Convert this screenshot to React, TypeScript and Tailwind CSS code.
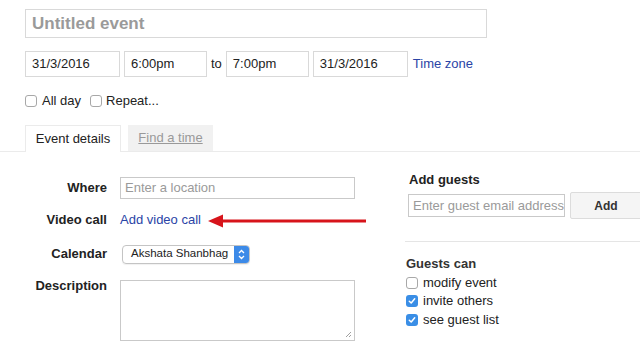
import React from 'react';

function Box({ className = '', children }: { className?: string; children?: React.ReactNode }) {
  return (
    <div className={`h-[26px] border border-[#d9d9d9] flex items-center pl-[6px] text-[13px] text-[#222] ${className}`}>
      {children}
    </div>
  );
}

function Check({ checked = false }: { checked?: boolean }) {
  if (checked) {
    return (
      <span className="w-[12px] h-[12px] rounded-[3px] bg-[#3a8ee6] flex items-center justify-center shrink-0">
        <svg width="8" height="8" viewBox="0 0 8 8">
          <path d="M1.3 4.2 L3.2 6 L6.7 1.8" stroke="white" strokeWidth="1.5" fill="none" strokeLinecap="round" strokeLinejoin="round" />
        </svg>
      </span>
    );
  }
  return <span className="w-[12px] h-[12px] rounded-[3px] border border-[#a8a8a8] bg-white shrink-0" />;
}

export default function App() {
  return (
    <div
      className="relative w-[640px] h-[350px] overflow-hidden bg-white text-[13px] text-[#222]"
      style={{ fontFamily: '"Liberation Sans", Arial, sans-serif' }}
    >
      {/* Title + dates */}
      <div className="pl-[25px] pt-[9px]">
        <div className="w-[462px] h-[29px] border border-[#d9d9d9] flex items-center pl-[6px] text-[17px] font-bold text-[#9a9a9a]">
          Untitled event
        </div>

        <div className="mt-[13px] flex items-center">
          <Box className="w-[95px]">31/3/2016</Box>
          <Box className="w-[83px] ml-[4px]">6:00pm</Box>
          <span className="ml-[4px] mr-[4px] text-[13px]">to</span>
          <Box className="w-[83px]">7:00pm</Box>
          <Box className="w-[95px] ml-[4px]">31/3/2016</Box>
          <span className="ml-[5px] text-[13px] text-[#2a44a6]">Time zone</span>
        </div>

        <div className="mt-[17px] flex items-center h-[14px]">
          <Check />
          <span className="ml-[5px]">All day</span>
          <span className="ml-[9px] flex items-center">
            <Check />
          </span>
          <span className="ml-[4px]">Repeat...</span>
        </div>
      </div>

      {/* Tabs */}
      <div className="mt-[17px] flex items-end border-b border-[#ebebeb] pl-[25px] h-[27px]">
        <div className="h-[27px] w-[96px] border border-b-0 border-[#ebebeb] bg-white flex items-center justify-center -mb-px">
          Event details
        </div>
        <div className="ml-[7px] h-[26px] w-[85px] bg-[#f1f1f1] flex items-center justify-center text-[#999] underline">
          Find a time
        </div>
      </div>

      {/* Body */}
      <div className="flex">
        {/* Left form */}
        <div className="w-[405px] shrink-0 pt-[25px]">
          <div className="flex items-center h-[22px]">
            <span className="w-[107px] text-right font-bold">Where</span>
            <div className="ml-[13px] w-[235px] h-[22px] border border-[#c9c9c9] flex items-center pl-[4px] text-[#9a9a9a]">
              Enter a location
            </div>
          </div>

          <div className="mt-[10px] flex items-center h-[22px]">
            <span className="w-[107px] text-right font-bold">Video call</span>
            <span className="ml-[13px] text-[#2a44a6]">Add video call</span>
          </div>

          <div className="mt-[12px] flex items-center h-[22px]">
            <span className="w-[107px] text-right font-bold">Calendar</span>
            <div className="ml-[15px] w-[128px] h-[19px] rounded-[4px] border border-[#c4c4c4] flex items-center overflow-hidden shadow-[0_1px_1px_rgba(0,0,0,0.06)]">
              <span className="flex-1 pl-[8px] text-[11.5px] leading-none whitespace-nowrap">Akshata Shanbhag</span>
              <span className="w-[15px] h-full bg-[#3c8ae8] flex items-center justify-center shrink-0">
                <svg width="7" height="11" viewBox="0 0 7 11">
                  <path d="M1 4 L3.5 1.5 L6 4 M1 7 L3.5 9.5 L6 7" stroke="white" strokeWidth="1.3" fill="none" />
                </svg>
              </span>
            </div>
          </div>

          <div className="mt-[15px] flex items-start">
            <span className="w-[107px] text-right font-bold -mt-[4px]">Description</span>
            <div className="relative ml-[13px] w-[235px] h-[61px] border border-[#c9c9c9]">
              <svg className="absolute right-[2px] bottom-[2px]" width="7" height="7" viewBox="0 0 7 7">
                <path d="M1 6 L6 1 M4 6 L6 4" stroke="#888" strokeWidth="0.8" />
              </svg>
            </div>
          </div>
        </div>

        {/* Right column */}
        <div className="flex-1 pt-[20px]">
          <div className="pl-[4px] font-bold leading-[16px]">Add guests</div>
          <div className="mt-[4px] flex items-center">
            <div className="ml-[3px] w-[157px] h-[23px] border border-[#c9c9c9] flex items-center pl-[4px] text-[#9a9a9a] whitespace-nowrap overflow-hidden">
              Enter guest email address
            </div>
            <div className="ml-[5px] w-[72px] h-[27px] border border-[#dcdcdc] rounded-[2px] bg-[#f5f5f5] flex items-center justify-center font-bold text-[12px] text-[#333]">
              Add
            </div>
          </div>

          <div className="mt-[22px] h-px bg-[#e5e5e5]" />

          <div className="mt-[14px] pl-[1px] font-bold text-[#333] leading-[16px]">Guests can</div>
          <div className="mt-[2px] pl-[1px] flex flex-col">
            <div className="h-[18px] flex items-center gap-[5px]">
              <Check />
              <span>modify event</span>
            </div>
            <div className="h-[18px] flex items-center gap-[5px]">
              <Check checked />
              <span>invite others</span>
            </div>
            <div className="h-[19px] flex items-center gap-[5px]">
              <Check checked />
              <span>see guest list</span>
            </div>
          </div>
        </div>
      </div>

      {/* Annotation arrow */}
      <svg className="absolute left-[201px] top-[212px]" width="170" height="18" viewBox="0 0 170 18">
        <line x1="18" y1="9" x2="165" y2="9" stroke="#d7141b" strokeWidth="3" />
        <polygon points="7,9 22,2.5 22,15.5" fill="#d7141b" />
      </svg>
    </div>
  );
}
